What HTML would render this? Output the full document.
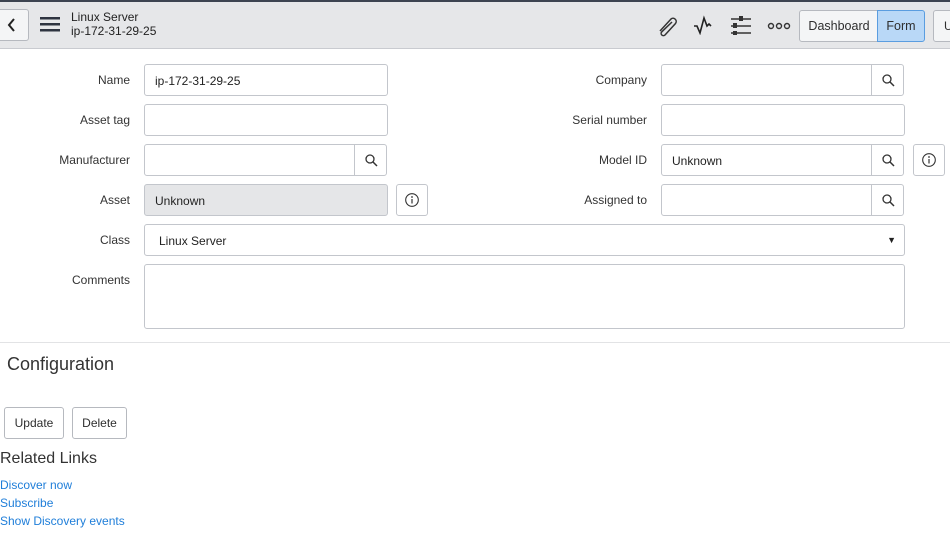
<!DOCTYPE html>
<html><head><style>
*{box-sizing:border-box;margin:0;padding:0}
body{width:950px;height:538px;overflow:hidden;background:#fff;font-family:"Liberation Sans",sans-serif;font-size:12px;color:#2e2e2e;position:relative}
.hdr{position:absolute;left:0;top:0;width:950px;height:49px;background:#e6e7e9;border-top:2px solid #3d4451;border-bottom:1px solid #c9cbd0}
.abs{position:absolute}
.lbl{position:absolute;text-align:right;font-size:12px;color:#333}
.in{position:absolute;height:32px;border:1px solid #c3c6cc;border-radius:3px;background:#fff;font-size:12px;padding:9px 10px;color:#222}
.sb{position:absolute;width:33px;height:32px;border:1px solid #c3c6cc;border-radius:0 3px 3px 0;background:#fff}
.ib{position:absolute;width:32px;height:32px;border:1px solid #c3c6cc;border-radius:3px;background:#fff}
.btn{position:absolute;height:32px;border:1px solid #b6b9bf;border-radius:3px;background:#fff;font-size:12px;text-align:center;line-height:30px}
a{color:#1f7ed9;text-decoration:none;position:absolute;left:0;font-size:12px}
</style></head><body>
<div class="hdr">
 <div class="abs" style="left:-4px;top:7px;width:33px;height:32px;border:1px solid #b6b9bf;border-radius:3px;background:#f4f5f6"></div>
 <svg class="abs" style="left:7px;top:16px" width="10" height="14"><path d="M7 1 L2 7 L7 13" stroke="#222" stroke-width="2" fill="none"/></svg>
 <svg class="abs" style="left:40px;top:14px" width="20" height="18"><rect y="1" width="20" height="2.5" fill="#2e3440"/><rect y="7" width="20" height="2.5" fill="#2e3440"/><rect y="13" width="20" height="2.5" fill="#2e3440"/></svg>
 <div class="abs" style="left:71px;top:8px;font-size:12px;line-height:14px;color:#222">Linux Server<br>ip-172-31-29-25</div>
 <svg class="abs" style="left:656px;top:12px" width="24" height="24"><path d="M4 17 L15 5 a3.2 3.2 0 0 1 4.5 4.5 L9 21 a2.2 2.2 0 0 1 -3.2 -3.2 L16 8" stroke="#333" stroke-width="1.5" fill="none"/></svg>
 <svg class="abs" style="left:693px;top:13px" width="24" height="20"><path d="M1 11 L4 11 L7 18 L11 3 L14 11 L16 9 L18 11" stroke="#222" stroke-width="1.6" fill="none"/></svg>
 <svg class="abs" style="left:730px;top:13px" width="22" height="22"><path d="M1 4 H21 M1 11 H21 M1 18 H21" stroke="#333" stroke-width="1.5"/><rect x="9" y="1" width="4" height="5" fill="#333"/><rect x="3" y="8" width="4" height="5" fill="#333"/><rect x="3" y="16" width="4" height="4" fill="#333"/></svg>
 <svg class="abs" style="left:767px;top:19px" width="24" height="10"><circle cx="4" cy="5" r="2.5" stroke="#333" stroke-width="1.4" fill="none"/><circle cx="12" cy="5" r="2.5" stroke="#333" stroke-width="1.4" fill="none"/><circle cx="20" cy="5" r="2.5" stroke="#333" stroke-width="1.4" fill="none"/></svg>
 <div class="abs" style="left:799px;top:8px;width:80px;height:32px;border:1px solid #b6b9bf;border-radius:3px 0 0 3px;background:#f4f5f6;text-align:center;line-height:30px;font-size:12.5px">Dashboard</div>
 <div class="abs" style="left:877px;top:8px;width:48px;height:32px;border:1px solid #5a9de0;border-radius:0 3px 3px 0;background:#b9d8f7;text-align:center;line-height:30px;font-size:12.5px">Form</div>
 <div class="abs" style="left:933px;top:8px;width:30px;height:32px;border:1px solid #b6b9bf;border-radius:3px;background:#f4f5f6;line-height:30px;padding-left:10px">U</div>
</div>

<div class="lbl" style="left:0;width:130px;top:73px">Name</div>
<div class="in" style="left:144px;top:64px;width:244px">ip-172-31-29-25</div>
<div class="lbl" style="left:0;width:130px;top:113px">Asset tag</div>
<div class="in" style="left:144px;top:104px;width:244px"></div>
<div class="lbl" style="left:0;width:130px;top:153px">Manufacturer</div>
<div class="in" style="left:144px;top:144px;width:212px;border-radius:3px 0 0 3px"></div>
<div class="sb" style="left:354px;top:144px"></div>
<div class="lbl" style="left:0;width:130px;top:193px">Asset</div>
<div class="in" style="left:144px;top:184px;width:244px;background:#e5e6e8">Unknown</div>
<div class="ib" style="left:396px;top:184px"></div>
<div class="lbl" style="left:0;width:130px;top:233px">Class</div>
<div class="in" style="left:144px;top:224px;width:761px;padding-left:14px">Linux Server<span style="position:absolute;right:8px;top:10px;font-size:9px">▼</span></div>
<div class="lbl" style="left:0;width:130px;top:273px">Comments</div>
<div class="in" style="left:144px;top:264px;width:761px;height:65px"></div>

<div class="lbl" style="left:500px;width:147px;top:73px">Company</div>
<div class="in" style="left:661px;top:64px;width:212px;border-radius:3px 0 0 3px"></div>
<div class="sb" style="left:871px;top:64px"></div>
<div class="lbl" style="left:500px;width:147px;top:113px">Serial number</div>
<div class="in" style="left:661px;top:104px;width:244px"></div>
<div class="lbl" style="left:500px;width:147px;top:153px">Model ID</div>
<div class="in" style="left:661px;top:144px;width:212px;border-radius:3px 0 0 3px">Unknown</div>
<div class="sb" style="left:871px;top:144px"></div>
<div class="ib" style="left:913px;top:144px"></div>
<div class="lbl" style="left:500px;width:147px;top:193px">Assigned to</div>
<div class="in" style="left:661px;top:184px;width:212px;border-radius:3px 0 0 3px"></div>
<div class="sb" style="left:871px;top:184px"></div>

<svg class="abs" style="left:0;top:0" width="950" height="260">
 <defs><g id="m"><circle cx="5" cy="5" r="4" stroke="#333" stroke-width="1.3" fill="none"/><path d="M8 8 L12 12" stroke="#333" stroke-width="1.5"/></g>
 <g id="i"><circle cx="7" cy="7" r="6.3" stroke="#333" stroke-width="1.1" fill="none"/><circle cx="7" cy="4" r="0.9" fill="#333"/><path d="M7 6 V10.5" stroke="#333" stroke-width="1.2"/></g></defs>
 <use href="#m" x="365" y="154"/><use href="#m" x="882" y="74"/><use href="#m" x="882" y="154"/><use href="#m" x="882" y="194"/>
 <use href="#i" x="405" y="193"/><use href="#i" x="922" y="153"/>
</svg>

<div class="abs" style="left:0;top:342px;width:950px;border-top:1px solid #e2e3e5"></div>
<div class="abs" style="left:7px;top:354px;font-size:18px;color:#333">Configuration</div>
<div class="btn" style="left:4px;top:407px;width:60px">Update</div>
<div class="btn" style="left:72px;top:407px;width:55px">Delete</div>
<div class="abs" style="left:0;top:450px;font-size:16px;color:#333">Related Links</div>
<a style="top:478px">Discover now</a>
<a style="top:496px">Subscribe</a>
<a style="top:514px">Show Discovery events</a>
</body></html>
